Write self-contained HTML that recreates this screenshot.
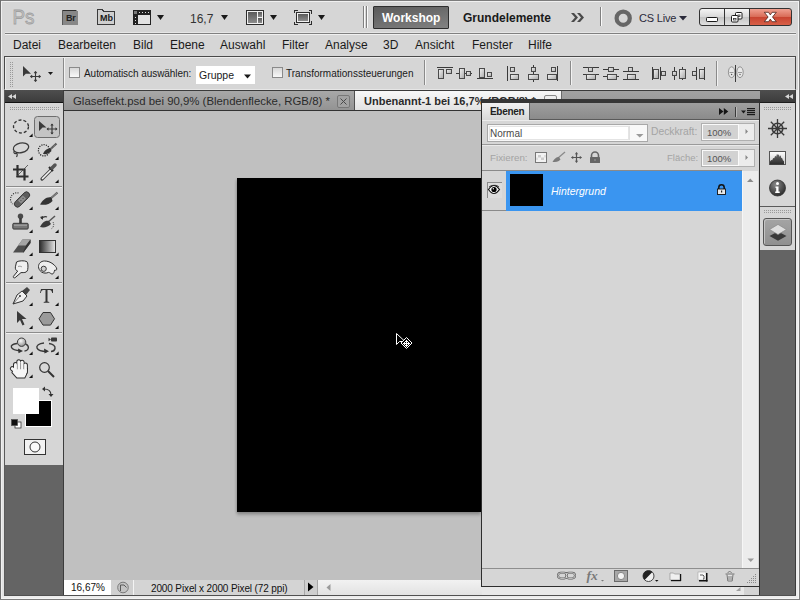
<!DOCTYPE html>
<html><head><meta charset="utf-8">
<style>
*{margin:0;padding:0;box-sizing:border-box}
html,body{width:800px;height:600px;overflow:hidden;background:#d6d6d6;font-family:"Liberation Sans",sans-serif;font-size:12px;color:#1a1a1a}
.a{position:absolute}
.t{position:absolute;white-space:nowrap;line-height:1}
</style></head><body>
<!-- app bar -->
<div id="appbar">

<div class="t" style="left:190px;top:13px;font-size:12px;color:#333">16,7</div>
<div class="a" style="left:373px;top:6px;width:76px;height:23px;border:1px solid #2e2e2e;border-radius:1px;background:linear-gradient(170deg,#5a5a5a,#828282)"></div>
<div class="t" style="left:382px;top:12px;font-size:12px;font-weight:bold;color:#fff">Workshop</div>
<div class="t" style="left:463px;top:12px;font-size:12px;font-weight:bold;color:#1a1a1a">Grundelemente</div>
<div class="t" style="left:639px;top:13px;font-size:11px;letter-spacing:-0.2px;color:#2a2a3a">CS Live</div>
<div class="a" style="left:699px;top:8px;width:26px;height:18px;border:1px solid #333;border-radius:3px 0 0 3px;background:linear-gradient(#f4f4f4,#d8d8d8 50%,#c4c4c4 51%,#e0e0e0)"></div>
<div class="a" style="left:724px;top:8px;width:26px;height:18px;border:1px solid #333;background:linear-gradient(#f4f4f4,#d8d8d8 50%,#c4c4c4 51%,#e0e0e0)"></div>
<div class="a" style="left:749px;top:8px;width:43px;height:18px;border:1px solid #333;border-radius:0 3px 3px 0;background:linear-gradient(#f0a090,#d86a55 50%,#c84430 51%,#d86048)"></div>
</div>
<div class="a" style="left:5px;top:32px;width:791px;height:1px;background:#e6e6e6"></div><div class="a" style="left:5px;top:33px;width:791px;height:1px;background:#808080"></div>
<div class="a" style="left:5px;top:34px;width:791px;height:1px;background:#f0f0f0"></div>

<!-- menu -->
<div id="menu">
<div class="t" style="left:13px;top:39px">Datei</div>
<div class="t" style="left:58px;top:39px">Bearbeiten</div>
<div class="t" style="left:133px;top:39px">Bild</div>
<div class="t" style="left:170px;top:39px">Ebene</div>
<div class="t" style="left:220px;top:39px">Auswahl</div>
<div class="t" style="left:282px;top:39px">Filter</div>
<div class="t" style="left:325px;top:39px">Analyse</div>
<div class="t" style="left:383px;top:39px">3D</div>
<div class="t" style="left:415px;top:39px">Ansicht</div>
<div class="t" style="left:472px;top:39px">Fenster</div>
<div class="t" style="left:528px;top:39px">Hilfe</div>
</div>

<!-- options bar -->
<div class="a" style="left:4px;top:56px;width:792px;height:34px;border:1px solid #4a4a4a;border-bottom-color:#e6e6e6;background:#d6d6d6;box-shadow:inset 1px 1px 0 #ececec"></div>
<div class="t" style="left:84px;top:69px;font-size:10px;letter-spacing:-0.05px">Automatisch auswählen:</div>
<div class="a" style="left:196px;top:66px;width:59px;height:18px;background:#fff"></div>
<div class="t" style="left:199px;top:70px;font-size:10.5px">Gruppe</div>
<div class="t" style="left:286px;top:69px;font-size:10px">Transformationssteuerungen</div>
<div class="a" style="left:69px;top:67px;width:11px;height:11px;border:1px solid #8a8a8a;background:linear-gradient(#d8d8d8,#f8f8f8)"></div>
<div class="a" style="left:272px;top:67px;width:11px;height:11px;border:1px solid #8a8a8a;background:linear-gradient(#d8d8d8,#f8f8f8)"></div>

<!-- toolbox header -->
<div class="a" style="left:5px;top:90px;width:58px;height:12px;background:linear-gradient(#4e4e4e,#3c3c3c)"></div><div class="a" style="left:5px;top:102px;width:58px;height:1px;background:#111"></div>
<!-- toolbox body -->
<div class="a" style="left:5px;top:103px;width:58px;height:362px;background:#d6d6d6"></div>
<div class="a" style="left:5px;top:465px;width:58px;height:130px;background:#646464"></div>
<div class="a" style="left:4px;top:90px;width:1px;height:506px;background:#5a5a5a"></div>
<div class="a" style="left:63px;top:90px;width:1px;height:506px;background:#3c3c3c"></div>

<!-- document area -->
<div class="a" style="left:64px;top:90px;width:696px;height:506px;background:#c0c0c0"></div>
<!-- tabs bar -->
<div class="a" style="left:64px;top:90px;width:696px;height:1px;background:#3a3a3a"></div>
<div class="a" style="left:64px;top:91px;width:696px;height:19px;background:linear-gradient(#a2a2a2,#929292)"></div>
<div class="a" style="left:64px;top:91px;width:290px;height:19px;background:linear-gradient(#a8a8a8,#939393)"></div>
<div class="a" style="left:354px;top:91px;width:1px;height:19px;background:#505050"></div>
<div class="a" style="left:355px;top:91px;width:206px;height:19px;background:linear-gradient(#f8f8f8,#e2e2e2)"></div>
<div class="a" style="left:561px;top:91px;width:1px;height:19px;background:#6a6a6a"></div>
<div class="a" style="left:64px;top:110px;width:696px;height:1px;background:#333"></div>
<div class="t" style="left:73px;top:96px;font-size:11.4px;color:#2a2a2a">Glaseffekt.psd bei 90,9% (Blendenflecke, RGB/8) *</div>
<div class="a" style="left:337px;top:95px;width:13px;height:13px;border:1px solid #787878;border-radius:2px;background:#a2a2a2"></div>
<div class="t" style="left:364px;top:96px;font-size:11px;font-weight:bold;color:#2a2a2a">Unbenannt-1 bei 16,7% (RGB/8) *</div>
<div class="a" style="left:544px;top:95px;width:13px;height:13px;border:1px solid #8a8a8a;border-radius:2px;background:#eee"></div>
<!-- black doc -->
<div class="a" style="left:237px;top:178px;width:244px;height:334px;background:#000;box-shadow:0 3px 3px rgba(0,0,0,.22),-1px 1px 2px rgba(0,0,0,.12)"></div>

<!-- status bar -->
<div class="a" style="left:64px;top:580px;width:696px;height:15px;background:linear-gradient(#f2f2f2,#e2e2e2)"></div>
<div class="a" style="left:64px;top:580px;width:47px;height:15px;background:#fff"></div>
<div class="a" style="left:111px;top:580px;width:22px;height:15px;background:#d0d0d0"></div>
<div class="a" style="left:133px;top:580px;width:1px;height:15px;background:#f4f4f4"></div>
<div class="a" style="left:134px;top:580px;width:170px;height:15px;background:#d4d4d4"></div>
<div class="a" style="left:304px;top:580px;width:14px;height:15px;background:#cfcfcf;border-left:1px solid #a8a8a8;border-right:1px solid #a8a8a8"></div>
<div class="t" style="left:71px;top:583px;font-size:10px;color:#111">16,67%</div>
<div class="t" style="left:151px;top:584px;font-size:10px;letter-spacing:-0.13px;color:#111">2000 Pixel x 2000 Pixel (72 ppi)</div>

<!-- layers panel -->
<div class="a" style="left:481px;top:99px;width:279px;height:488px;background:#d6d6d6;border:1px solid #2e2e2e;border-top:4px solid #363636"></div>
<div class="a" style="left:482px;top:103px;width:277px;height:17px;background:linear-gradient(#9e9e9e,#8a8a8a)"></div>
<div class="a" style="left:530px;top:119px;width:229px;height:1px;background:#5a5a5a"></div>
<div class="a" style="left:482px;top:103px;width:47px;height:18px;background:linear-gradient(#f2f2f2,#d6d6d6)"></div>
<div class="a" style="left:529px;top:103px;width:1px;height:17px;background:#666"></div>
<div class="t" style="left:490px;top:107px;font-size:10px;font-weight:bold;letter-spacing:-0.3px;color:#222">Ebenen</div>
<div class="a" style="left:482px;top:120px;width:277px;height:1px;background:#ececec"></div>
<!-- blend mode -->
<div class="a" style="left:487px;top:124px;width:161px;height:18px;border:1px solid #a8a8a8;background:#f8f8f8"></div>
<div class="a" style="left:489px;top:126px;width:140px;height:14px;background:#fff;border:1px solid #e4e4e4"></div>
<div class="t" style="left:490px;top:129px;font-size:10px;color:#4a4a4a">Normal</div>
<div class="t" style="left:651px;top:127px;font-size:10.3px;color:#a4a4a4">Deckkraft:</div>
<div class="a" style="left:701px;top:123px;width:54px;height:18px;border:1px solid #b0b0b0;background:#ececec"></div>
<div class="a" style="left:702px;top:124px;width:37px;height:16px;border:1px solid #fafafa;background:#d2d2d2"></div>
<div class="t" style="left:707px;top:128px;font-size:9.5px;color:#555">100%</div>
<div class="a" style="left:482px;top:144px;width:277px;height:1px;background:#9a9a9a"></div>
<div class="a" style="left:482px;top:145px;width:277px;height:1px;background:#eaeaea"></div>
<div class="t" style="left:490px;top:153px;font-size:9.8px;color:#a4a4a4">Fixieren:</div>
<div class="t" style="left:667px;top:153px;font-size:9.5px;color:#a4a4a4">Fläche:</div>
<div class="a" style="left:701px;top:149px;width:54px;height:18px;border:1px solid #b0b0b0;background:#ececec"></div>
<div class="a" style="left:702px;top:150px;width:37px;height:16px;border:1px solid #fafafa;background:#d2d2d2"></div>
<div class="t" style="left:707px;top:154px;font-size:9.5px;color:#555">100%</div>
<!-- layer list -->
<div class="a" style="left:482px;top:170px;width:260px;height:1px;background:#8a8a8a"></div>
<div class="a" style="left:742px;top:171px;width:16px;height:397px;background:#ececec;border-left:1px solid #f6f6f6"></div>
<div class="a" style="left:506px;top:171px;width:236px;height:40px;background:#3a95f0"></div>
<div class="a" style="left:482px;top:210px;width:24px;height:1px;background:#8a8a8a"></div>
<div class="a" style="left:487px;top:182px;width:15px;height:16px;border-top:1px solid #8a8a8a;border-left:1px solid #8a8a8a;background:#dcdcdc"></div>
<div class="a" style="left:510px;top:174px;width:33px;height:32px;background:#000"></div>
<div class="t" style="left:551px;top:186px;font-size:10.5px;font-style:italic;color:#fff">Hintergrund</div>
<!-- footer -->
<div class="a" style="left:482px;top:568px;width:277px;height:1px;background:#8e8e8e"></div>
<div class="a" style="left:482px;top:569px;width:277px;height:17px;background:#d6d6d6"></div>
<div class="a" style="left:482px;top:587px;width:262px;height:8px;background:#e8e8e8"></div>
<div class="a" style="left:744px;top:587px;width:15px;height:8px;background:#d4d4d4"></div><div class="a" style="left:759px;top:587px;width:1px;height:8px;background:#333"></div>

<!-- right dock -->
<div class="a" style="left:760px;top:90px;width:35px;height:505px;background:#646464"></div><div class="a" style="left:795px;top:90px;width:1px;height:506px;background:#3a3a3a"></div>
<div class="a" style="left:760px;top:90px;width:35px;height:12px;background:linear-gradient(#4e4e4e,#3c3c3c)"></div>
<div class="a" style="left:760px;top:102px;width:35px;height:1px;background:#1e1e1e"></div>
<div class="a" style="left:760px;top:103px;width:35px;height:103px;background:#d6d6d6"></div>
<div class="a" style="left:760px;top:206px;width:35px;height:1px;background:#5a5a5a"></div>
<div class="a" style="left:760px;top:207px;width:35px;height:43px;background:#d6d6d6"></div>
<div class="a" style="left:763px;top:218px;width:29px;height:28px;border:1px solid #555;border-radius:3px;background:linear-gradient(#a4a4a4,#909090);box-shadow:inset 1px 1px 0 #c4c4c4"></div>
<div class="a" style="left:0;top:595px;width:800px;height:1px;background:#505050"></div>
<div class="a" style="left:0;top:596px;width:800px;height:3px;background:#ececec"></div>
<!-- frame borders -->
<div class="a" style="left:796px;top:90px;width:2px;height:506px;background:#ececec"></div>
<div class="a" style="left:2px;top:90px;width:2px;height:506px;background:#e2e2e2"></div>
<div class="a" style="left:0;top:0;width:800px;height:1px;background:#7c7c7c"></div>
<div class="a" style="left:0;top:0;width:1px;height:600px;background:#6e6e6e"></div>
<div class="a" style="left:1px;top:1px;width:798px;height:1px;background:#f0f0f0"></div>
<div class="a" style="left:1px;top:1px;width:1px;height:598px;background:#f0f0f0"></div>
<div class="a" style="left:799px;top:0;width:1px;height:600px;background:#7c7c7c"></div>
<div class="a" style="left:798px;top:1px;width:1px;height:598px;background:#f4f4f4"></div>
<div class="a" style="left:0;top:599px;width:800px;height:1px;background:#7c7c7c"></div>
<div class="a" style="left:1px;top:598px;width:798px;height:1px;background:#f4f4f4"></div>
<svg class="a" style="left:0;top:0" width="800" height="600" viewBox="0 0 800 600">
<g id="appicons" shape-rendering="crispEdges">
<text x="12.5" y="24.3" font-family="Liberation Sans" font-size="21" textLength="22" lengthAdjust="spacingAndGlyphs" fill="#c6c6c6" stroke="#a0a0a0" stroke-width="0.8">Ps</text>
<!-- Br -->
<path d="M62 10h14l2 2v13h-16z" fill="#878787"/>
<rect x="62" y="10" width="14" height="1" fill="#2e2e2e"/>
<rect x="62" y="10" width="1" height="15" fill="#5a5a5a"/>
<!-- Mb folder -->
<path d="M97.5 9.5h5l1 2h11v13h-17z" fill="#cfcfcf" stroke="#3a3a3a"/>
<!-- film -->
<rect x="133" y="10" width="18" height="15" fill="#222" />
<rect x="138" y="15" width="12" height="9" fill="#e2e2e2"/>
<rect x="134" y="11" width="3" height="3" fill="#7a7a7a"/>
<rect x="139" y="12" width="1" height="1" fill="#ddd"/><rect x="142" y="12" width="1" height="1" fill="#ddd"/><rect x="145" y="12" width="1" height="1" fill="#ddd"/><rect x="148" y="12" width="1" height="1" fill="#ddd"/>
<rect x="135" y="17" width="1" height="1" fill="#ddd"/><rect x="135" y="20" width="1" height="1" fill="#ddd"/><rect x="135" y="23" width="1" height="1" fill="#ddd"/>
<path d="M157 15h7l-3.5 5z" fill="#1a1a1a" shape-rendering="auto"/>
<path d="M221 15h7l-3.5 5z" fill="#1a1a1a" shape-rendering="auto"/>
<path d="M270 15h7l-3.5 5z" fill="#1a1a1a" shape-rendering="auto"/>
<path d="M318 15h7l-3.5 5z" fill="#1a1a1a" shape-rendering="auto"/>
<path d="M679 16h8l-4 4.5z" fill="#2a2a3a" shape-rendering="auto"/>
<!-- grid icon -->
<rect x="246" y="10" width="18" height="15" fill="#2c2c2c"/>
<rect x="247" y="11" width="16" height="13" fill="#f2f2f2"/>
<defs><linearGradient id="g1" x1="0" y1="0" x2="0" y2="1"><stop offset="0" stop-color="#5a5a5a"/><stop offset="1" stop-color="#8c8c8c"/></linearGradient></defs>
<rect x="248" y="12" width="9" height="11" fill="url(#g1)"/>
<rect x="258" y="12" width="4" height="5" fill="url(#g1)"/>
<rect x="258" y="18" width="4" height="5" fill="url(#g1)"/>
<!-- screen icon -->
<path d="M294.5 13v-3h3M308.5 10.5h3v3M311.5 21v3h-3M297.5 24.5h-3v-3" fill="none" stroke="#2c2c2c"/>
<rect x="296" y="12" width="14" height="11" fill="#2c2c2c"/>
<rect x="297" y="13" width="12" height="9" fill="#f2f2f2"/>
<rect x="298" y="14" width="10" height="7" fill="url(#g1)"/>
<!-- separators -->
<rect x="363" y="6" width="1" height="22" fill="#808080"/><rect x="364" y="6" width="1" height="22" fill="#fafafa"/>
<rect x="366" y="6" width="1" height="22" fill="#808080"/><rect x="367" y="6" width="1" height="22" fill="#fafafa"/>
<rect x="600" y="7" width="1" height="19" fill="#808080"/><rect x="601" y="7" width="1" height="19" fill="#fafafa"/>
<!-- chevrons -->
<path d="M571 13l4 4.5-4 4.5h3l4-4.5-4-4.5zM577 13l4 4.5-4 4.5h3l4-4.5-4-4.5z" fill="#4a4a4a" shape-rendering="auto"/>
<!-- cs live ring -->
<circle cx="623.2" cy="18.2" r="6.6" fill="none" stroke="#666" stroke-width="4.2" shape-rendering="auto"/>
<!-- minimize -->
<rect x="706.5" y="17.5" width="11" height="4" rx=".8" fill="#fff" stroke="#1a1a1a" shape-rendering="auto"/>
<!-- restore -->
<rect x="735.5" y="12.5" width="6.5" height="6.5" rx="1" fill="#fff" stroke="#1a1a1a" shape-rendering="auto"/><rect x="738" y="15" width="2" height="1.5" fill="none" stroke="#333" stroke-width=".8" shape-rendering="auto"/>
<rect x="731.5" y="15.5" width="6.5" height="6.5" rx="1" fill="#fff" stroke="#1a1a1a" shape-rendering="auto"/><rect x="733.5" y="18.5" width="2.5" height="1.5" fill="none" stroke="#333" stroke-width=".8" shape-rendering="auto"/>
<!-- close X -->
<path d="M764.3 12.3h4.2l1.8 2.6 1.8-2.6h4.2l-3.8 4.7 3.8 4.7h-4.2l-1.8-2.6-1.8 2.6h-4.2l3.8-4.7z" fill="#fff" stroke="#4a2018" stroke-width="0.8" shape-rendering="auto"/>
</g>
<g id="tools">
<path d="M12 94v5l-4-2.5zM16 94v5l-4-2.5z" fill="#d8d8d8"/>
<rect x="10" y="107" width="1" height="1" fill="#9a9a9a"/>
<rect x="12" y="107" width="1" height="1" fill="#9a9a9a"/>
<rect x="14" y="107" width="1" height="1" fill="#9a9a9a"/>
<rect x="16" y="107" width="1" height="1" fill="#9a9a9a"/>
<rect x="18" y="107" width="1" height="1" fill="#9a9a9a"/>
<rect x="20" y="107" width="1" height="1" fill="#9a9a9a"/>
<rect x="22" y="107" width="1" height="1" fill="#9a9a9a"/>
<rect x="24" y="107" width="1" height="1" fill="#9a9a9a"/>
<rect x="26" y="107" width="1" height="1" fill="#9a9a9a"/>
<rect x="28" y="107" width="1" height="1" fill="#9a9a9a"/>
<rect x="30" y="107" width="1" height="1" fill="#9a9a9a"/>
<rect x="32" y="107" width="1" height="1" fill="#9a9a9a"/>
<rect x="34" y="107" width="1" height="1" fill="#9a9a9a"/>
<rect x="36" y="107" width="1" height="1" fill="#9a9a9a"/>
<rect x="38" y="107" width="1" height="1" fill="#9a9a9a"/>
<rect x="40" y="107" width="1" height="1" fill="#9a9a9a"/>
<rect x="42" y="107" width="1" height="1" fill="#9a9a9a"/>
<rect x="44" y="107" width="1" height="1" fill="#9a9a9a"/>
<rect x="46" y="107" width="1" height="1" fill="#9a9a9a"/>
<rect x="48" y="107" width="1" height="1" fill="#9a9a9a"/>
<rect x="50" y="107" width="1" height="1" fill="#9a9a9a"/>
<rect x="52" y="107" width="1" height="1" fill="#9a9a9a"/>
<rect x="54" y="107" width="1" height="1" fill="#9a9a9a"/>
<rect x="56" y="107" width="1" height="1" fill="#9a9a9a"/>
<rect x="58" y="107" width="1" height="1" fill="#9a9a9a"/>
<rect x="10" y="109" width="1" height="1" fill="#9a9a9a"/>
<rect x="12" y="109" width="1" height="1" fill="#9a9a9a"/>
<rect x="14" y="109" width="1" height="1" fill="#9a9a9a"/>
<rect x="16" y="109" width="1" height="1" fill="#9a9a9a"/>
<rect x="18" y="109" width="1" height="1" fill="#9a9a9a"/>
<rect x="20" y="109" width="1" height="1" fill="#9a9a9a"/>
<rect x="22" y="109" width="1" height="1" fill="#9a9a9a"/>
<rect x="24" y="109" width="1" height="1" fill="#9a9a9a"/>
<rect x="26" y="109" width="1" height="1" fill="#9a9a9a"/>
<rect x="28" y="109" width="1" height="1" fill="#9a9a9a"/>
<rect x="30" y="109" width="1" height="1" fill="#9a9a9a"/>
<rect x="32" y="109" width="1" height="1" fill="#9a9a9a"/>
<rect x="34" y="109" width="1" height="1" fill="#9a9a9a"/>
<rect x="36" y="109" width="1" height="1" fill="#9a9a9a"/>
<rect x="38" y="109" width="1" height="1" fill="#9a9a9a"/>
<rect x="40" y="109" width="1" height="1" fill="#9a9a9a"/>
<rect x="42" y="109" width="1" height="1" fill="#9a9a9a"/>
<rect x="44" y="109" width="1" height="1" fill="#9a9a9a"/>
<rect x="46" y="109" width="1" height="1" fill="#9a9a9a"/>
<rect x="48" y="109" width="1" height="1" fill="#9a9a9a"/>
<rect x="50" y="109" width="1" height="1" fill="#9a9a9a"/>
<rect x="52" y="109" width="1" height="1" fill="#9a9a9a"/>
<rect x="54" y="109" width="1" height="1" fill="#9a9a9a"/>
<rect x="56" y="109" width="1" height="1" fill="#9a9a9a"/>
<rect x="58" y="109" width="1" height="1" fill="#9a9a9a"/>
<rect x="6" y="186" width="56" height="1" fill="#8c8c8c"/><rect x="6" y="187" width="56" height="1" fill="#f0f0f0"/>
<rect x="6" y="282" width="56" height="1" fill="#8c8c8c"/><rect x="6" y="283" width="56" height="1" fill="#f0f0f0"/>
<rect x="6" y="332" width="56" height="1" fill="#8c8c8c"/><rect x="6" y="333" width="56" height="1" fill="#f0f0f0"/>
<path d="M29 137h3.6v-3.6z" fill="#111"/>
<path d="M29 160h3.6v-3.6z" fill="#111"/>
<path d="M55 160h3.6v-3.6z" fill="#111"/>
<path d="M29 183h3.6v-3.6z" fill="#111"/>
<path d="M55 183h3.6v-3.6z" fill="#111"/>
<path d="M29 210h3.6v-3.6z" fill="#111"/>
<path d="M55 210h3.6v-3.6z" fill="#111"/>
<path d="M29 233h3.6v-3.6z" fill="#111"/>
<path d="M55 233h3.6v-3.6z" fill="#111"/>
<path d="M29 256h3.6v-3.6z" fill="#111"/>
<path d="M55 256h3.6v-3.6z" fill="#111"/>
<path d="M29 279h3.6v-3.6z" fill="#111"/>
<path d="M55 279h3.6v-3.6z" fill="#111"/>
<path d="M29 306h3.6v-3.6z" fill="#111"/>
<path d="M55 306h3.6v-3.6z" fill="#111"/>
<path d="M29 329h3.6v-3.6z" fill="#111"/>
<path d="M55 329h3.6v-3.6z" fill="#111"/>
<path d="M29 355h3.6v-3.6z" fill="#111"/>
<path d="M55 355h3.6v-3.6z" fill="#111"/>
<path d="M29 378h3.6v-3.6z" fill="#111"/>
<rect x="34.5" y="116.5" width="25" height="21" rx="3" fill="#c4c4c4" stroke="#6e6e6e"/>
<ellipse cx="21" cy="126.5" rx="7.5" ry="6.5" fill="none" stroke="#333" stroke-width="1.3" stroke-dasharray="3 2"/>
<path d="M39 121v10l3.5-3.5h4z" fill="#3a3a3a"/>
<path d="M52 124v10M47 129h10" stroke="#3a3a3a" stroke-width="1.2"/><path d="M50.3 125.5l1.7-2 1.7 2zM50.3 132.5l1.7 2 1.7-2zM48.5 127.3l-2 1.7 2 1.7zM55.5 127.3l2 1.7-2 1.7z" fill="#3a3a3a"/>
<ellipse cx="21" cy="147.8" rx="7.8" ry="4.8" fill="none" stroke="#3a3a3a" stroke-width="1.3" transform="rotate(-12 21 147.8)"/><path d="M14.5 151c-1.5 1.5 0 3 1.5 2.5s1.5 2 .5 3.5" fill="none" stroke="#3a3a3a" stroke-width="1.2"/>
<circle cx="44" cy="150.3" r="5.6" fill="none" stroke="#1a1a1a" stroke-width="1.2" stroke-dasharray="1.1 1.2"/>
<path d="M56.5 143.5l-7 6.5" stroke="#555" stroke-width="2"/><path d="M56.5 143.5l-7 6.5" stroke="#ccc" stroke-width=".5" stroke-dasharray="1 1"/><path d="M50.5 148.5c-3.5-.5-6.5 2.5-7.5 5.5 3.5.5 6.5-.5 8.5-3z" fill="#333"/>
<path d="M17.5 165v11.5h11M13 169.5h11.5v11" fill="none" stroke="#2e2e2e" stroke-width="2.2"/><path d="M16 177l12-12" stroke="#444" stroke-width="0.8"/>
<path d="M42 179l9-9" stroke="#444" stroke-width="3.2" stroke-linecap="round"/><path d="M42.5 178.5l8-8" stroke="#f6f6f6" stroke-width="1.6" stroke-linecap="round"/><path d="M49 167l4 4" stroke="#2a2a2a" stroke-width="2.2"/><path d="M52 168l3-3" stroke="#555" stroke-width="3.5" stroke-linecap="round"/>
<path d="M18.5 193a6.5 6.5 0 0 0 -6 11" fill="none" stroke="#222" stroke-width="1.1" stroke-dasharray="1 1.3"/><g transform="rotate(-45 22 199.5)"><rect x="12.5" y="196.3" width="19" height="6.4" rx="3.2" fill="#5e5e5e" stroke="#2e2e2e" stroke-width=".8"/><rect x="18.5" y="197.3" width="7" height="4.4" fill="#909090"/><circle cx="20.5" cy="199.5" r=".6" fill="#444"/><circle cx="23.5" cy="199.5" r=".6" fill="#444"/></g>
<path d="M57.5 192.5l-7.5 6.5" stroke="#555" stroke-width="2"/><path d="M57.5 192.5l-7.5 6.5" stroke="#ccc" stroke-width=".5"/><path d="M51.5 197.5c-4.5-1.5-9 2.5-11.5 7 4.5 1 9.5 0 12.5-3.5z" fill="#333"/>
<circle cx="20.5" cy="216.3" r="2.7" fill="#4a4a4a"/><rect x="19.2" y="218" width="2.6" height="5.5" fill="#3a3a3a"/><rect x="12.8" y="223.3" width="15.4" height="5.8" rx="1" fill="#777" stroke="#2e2e2e" stroke-width="0.9"/><rect x="14" y="224.5" width="13" height="1.5" fill="#999"/>
<path d="M55 216l-8 7" stroke="#555" stroke-width="1.5"/><path d="M49 221c-4-1-7 2-9 6 4 1 8 0 11-3z" fill="#3a3a3a"/><path d="M47 217c-2-1-4 0-6 1.5" fill="none" stroke="#333" stroke-width="1.2"/><path d="M40 217l3 3 0-4z" fill="#333"/><path d="M53 222a5 5 0 0 1 -2 7" fill="none" stroke="#333" stroke-dasharray="1 1"/>
<path d="M13 252.5l9.5-13h8v3.5l-7 9.5z" fill="#4e4e4e"/><path d="M18 245.5l4.5-6h8l-4.5 6z" fill="#a4a4a4"/><path d="M26 245.5l4.5-6v3.5l-7 9.5h-.5z" fill="#333"/>
<defs><linearGradient id="grd" x1="0" x2="1"><stop offset="0" stop-color="#2a2a2a"/><stop offset="1" stop-color="#e8e8e8"/></linearGradient><radialGradient id="sph" cx=".4" cy=".35" r=".7"><stop offset="0" stop-color="#fafafa"/><stop offset="1" stop-color="#8a8a8a"/></radialGradient></defs>
<rect x="39.5" y="240.5" width="16" height="12" fill="url(#grd)" stroke="#333"/>
<path d="M16.5 262c2.5-1.5 8-1.6 10.3-.4 1.3 1 1.4 5.2.9 8-.4 2.2-2 3-4.5 3h-2.2l-5.8 5c-1 .8-2.4-.1-1.8-1.2l4.3-5.3c-2-.6-2.6-2.4-2.3-4.3z" fill="#f0f0f0" stroke="#2e2e2e" stroke-width="1"/><path d="M18 266.5c1.5-.5 3-.3 4 .5" fill="none" stroke="#777" stroke-width=".7"/>
<path d="M38.5 266.5c0-3 2.5-5.5 6-5.5 3 0 6 1 8.5 3 2 1.5 3.5 3.3 3.8 5 0 1-1 1.5-2 1-.8 1.8-1 4-2.6 4-1.5 0-2.2-1.6-3.7-1.6-2 1-5 1-7-.4-2-1.5-3-3.5-3-5.5z" fill="#eeeeee" stroke="#2e2e2e" stroke-width="1"/><circle cx="43.7" cy="268.8" r="2.6" fill="#cfcfcf" stroke="#3a3a3a" stroke-width="1"/>
<path d="M13 304l4-9 5-4 5 5-4 5z" fill="#f0f0f0" stroke="#333" stroke-width="1"/><path d="M22 291l5-4 3 3-4 5z" fill="#444"/><circle cx="20" cy="296" r="0.9" fill="#222"/><path d="M13 304l7-8" stroke="#333" stroke-width="0.6"/>
<path d="M41 289h12v4h-.8c-.3-2-1-3-2.5-3h-2.2v11.5l1.8.5v.8h-5.6v-.8l1.8-.5v-11.5h-2.2c-1.5 0-2.2 1-2.5 3h-.8z" fill="#333"/>
<path d="M17 311v12l3-3 2.5 5.5 2-1-2.5-5.5h4.5z" fill="#3a3a3a"/>
<path d="M43 312.5h7.5l4 6.3-4 6.3h-7.5l-4-6.3z" fill="#9a9a9a" stroke="#333" stroke-width="1"/>
<path d="M17 343.5c-4 .5-6.5 2-5.5 4s5 3 9 3.3" fill="none" stroke="#3a3a3a" stroke-width="1.4"/><path d="M25.5 344c2.5 1 3.5 3 2.5 5s-2 2-3.5 2" fill="none" stroke="#3a3a3a" stroke-width="1.4"/><path d="M18 348.5l5 2.5-4.5 2.3z" fill="#333"/><circle cx="21.6" cy="342.2" r="4.2" fill="url(#sph)" stroke="#3a3a3a" stroke-width="1"/>
<path d="M44 343c-5 .5-8 2.5-7 5s6 3.5 10 3.5" fill="none" stroke="#3a3a3a" stroke-width="1.4"/><path d="M49 343.5c4 .5 6.5 2.5 6 5s-2.5 3-4 3" fill="none" stroke="#3a3a3a" stroke-width="1.4"/><path d="M44 348.5l5 2.8-4.5 2.2z" fill="#333"/><rect x="51" y="337.5" width="6" height="4" rx=".8" fill="#3a3a3a"/><path d="M51 339.5l-2.5-1.8v3.6z" fill="#3a3a3a"/>
<g fill="#2e2e2e" stroke="#2e2e2e" stroke-width="2"><rect x="14" y="363" width="3" height="10" rx="1.5"/><rect x="17.3" y="360.3" width="3" height="11" rx="1.5"/><rect x="20.6" y="360.8" width="3" height="11" rx="1.5"/><rect x="23.9" y="363.5" width="3" height="10" rx="1.5"/><path d="M14 369h12.9l-.9 5.5-1.5 3h-7.5l-4.5-5z"/><rect x="10.5" y="368.2" width="6.5" height="2.8" rx="1.4" transform="rotate(40 13.5 369.6)"/></g><g fill="#f6f6f6"><rect x="14" y="363" width="3" height="10" rx="1.5"/><rect x="17.3" y="360.3" width="3" height="11" rx="1.5"/><rect x="20.6" y="360.8" width="3" height="11" rx="1.5"/><rect x="23.9" y="363.5" width="3" height="10" rx="1.5"/><path d="M14 369h12.9l-.9 5.5-1.5 3h-7.5l-4.5-5z"/><rect x="10.5" y="368.2" width="6.5" height="2.8" rx="1.4" transform="rotate(40 13.5 369.6)"/></g><path d="M17.3 363.5v6M20.6 363v6.5M23.9 364.5v5" stroke="#9a9a9a" stroke-width=".6"/>
<circle cx="44.5" cy="367.5" r="4.8" fill="#d8d8d8" stroke="#333" stroke-width="1.2"/><path d="M48 371l6 6" stroke="#333" stroke-width="2"/>
<rect x="25.5" y="400.5" width="26" height="26" fill="#000" stroke="#fff"/><rect x="13" y="388" width="26" height="26" fill="#fff"/>
<rect x="15" y="422" width="6" height="6" fill="#fff" stroke="#333" stroke-width="0.8"/><rect x="11.5" y="419.5" width="6" height="6" fill="#111" stroke="#555" stroke-width="0.8"/>
<path d="M44 389c4 0 7 2 7 6" fill="none" stroke="#333" stroke-width="1.2"/><path d="M42 389l3-2.5v5z M51 397l-2.5-3h5z" fill="#333"/>
<rect x="24.5" y="439.5" width="21" height="15" fill="#f2f2f2" stroke="#333"/><circle cx="35" cy="447" r="5" fill="#fafafa" stroke="#333" stroke-width="1"/>
</g>
<g id="panelicons">
<path d="M340.5 98.5l6 6M346.5 98.5l-6 6" stroke="#4a4a4a" stroke-width="1"/>
<path d="M719 108v7l4.5-3.5zM723.8 108v7l4.5-3.5z" fill="#151515"/>
<rect x="735" y="107" width="1" height="10" fill="#3a3a3a"/><rect x="736" y="107" width="1" height="10" fill="#b8b8b8"/>
<path d="M741 110.5h5l-2.5 3z" fill="#1a1a1a"/>
<rect x="747" y="108" width="8" height="1.2" fill="#1a1a1a"/>
<rect x="747" y="110" width="8" height="1.2" fill="#1a1a1a"/>
<rect x="747" y="112" width="8" height="1.2" fill="#1a1a1a"/>
<rect x="747" y="114" width="8" height="1.2" fill="#1a1a1a"/>
<path d="M636 134h7.5l-3.75 3.5z" fill="#9a9a9a"/>
<rect x="629" y="126" width="1" height="14" fill="#e0e0e0"/>
<path d="M745.5 129v5l2.5-2.5z M745.5 155v5l2.5-2.5z" fill="#888"/>
<rect x="535.5" y="152.5" width="11" height="10" fill="#f2f2f2" stroke="#777"/><rect x="538" y="155" width="3" height="2.5" fill="#ccc"/><rect x="541" y="157.5" width="3" height="2.5" fill="#ccc"/><rect x="536" y="157.5" width="2" height="2.5" fill="#ddd"/><rect x="544" y="155" width="2" height="2.5" fill="#ddd"/>
<path d="M565 152l-7 6" stroke="#8a8a8a" stroke-width="1.3"/><path d="M559 157c-3 0-5 2-6.5 5 3 0 6 0 8-2.5z" fill="#7a7a7a"/>
<path d="M576.5 152.5v10M571.5 157.5h10" stroke="#555" stroke-width="1.2"/><path d="M574.8 154.2l1.7-2 1.7 2zM574.8 160.8l1.7 2 1.7-2zM573.2 155.8l-2 1.7 2 1.7zM579.8 155.8l2 1.7-2 1.7z" fill="#555"/>
<path d="M591.5 157v-1.5a3 3 0 0 1 7 0v1.5" fill="none" stroke="#666" stroke-width="1.6"/><rect x="590" y="157" width="10" height="6" rx="0.5" fill="#666"/><rect x="594.5" y="159" width="1" height="2" fill="#999"/>
<path d="M488.5 189.5c2-3 4-4 5.5-4s3.5 1 5.5 4c-2 3-4 4-5.5 4s-3.5-1-5.5-4z" fill="#fafafa" stroke="#111" stroke-width="1.2"/><circle cx="494" cy="189.5" r="2.6" fill="#000"/><circle cx="493.3" cy="188.8" r=".7" fill="#fff"/><path d="M489 187c2-2 8-2.5 10 0" fill="none" stroke="#222" stroke-width="0.8"/>
<path d="M718.8 189v-1.5a2.7 2.7 0 0 1 5.4 0v1.5" fill="none" stroke="#111" stroke-width="1.5"/><rect x="717.5" y="189" width="8" height="5.5" fill="#e8e8e8" stroke="#111" stroke-width="0.9"/><rect x="721" y="190.5" width="1.2" height="2" fill="#222"/>
<path d="M747 182h6.5l-3.25-3.5z" fill="#8a8a8a"/><path d="M747.5 558.5h6.5l-3.25 3.5z" fill="#9a9a9a"/>
<g fill="none"><rect x="558" y="572.8" width="9" height="5.6" rx="2.8" stroke="#5a5a5a" stroke-width="2"/><rect x="566" y="572.8" width="9" height="5.6" rx="2.8" stroke="#5a5a5a" stroke-width="2"/><rect x="558" y="572.8" width="9" height="5.6" rx="2.8" stroke="#f4f4f4" stroke-width=".7"/><rect x="566" y="572.8" width="9" height="5.6" rx="2.8" stroke="#f4f4f4" stroke-width=".7"/></g>
<text x="586.5" y="580" font-family="Liberation Serif" font-style="italic" font-weight="bold" font-size="13.5" fill="#7a7a7a">fx</text><path d="M601 580h3l-1.5 1.5z" fill="#777"/>
<rect x="614.5" y="570.5" width="13" height="11" fill="#a8a8a8" stroke="#6a6a6a"/><circle cx="621" cy="576" r="3.6" fill="#f4f4f4" stroke="#777" stroke-width=".8"/>
<circle cx="648.5" cy="576" r="5.5" fill="#f0f0f0" stroke="#444" stroke-width="1"/><path d="M652.4 572.1a5.5 5.5 0 0 0 -7.8 7.8z" fill="#222"/><path d="M655 580h3.5l-1.75 1.8z" fill="#111"/>
<path d="M670 573h3.5l1 1h5.5v6h-10z" fill="#f0f0f0" stroke="#888" stroke-width=".6"/><rect x="671" y="580" width="10" height="1.2" fill="#111"/><rect x="680" y="574" width="1.2" height="7" fill="#111"/>
<rect x="698" y="572" width="8" height="8" fill="#f8f8f8" stroke="#999" stroke-width=".5"/><rect x="699" y="580" width="8.5" height="1.5" fill="#111"/><rect x="706" y="573" width="1.5" height="8.5" fill="#111"/><path d="M700 575h3l1 1v3h-1" fill="none" stroke="#333" stroke-width=".8"/>
<path d="M725.5 574h9M727 574.5l.8 6.5h4.4l.8-6.5" fill="#e4e4e4" stroke="#777" stroke-width="1"/><path d="M728 573c0-2 3-2 3.5 0" fill="none" stroke="#777"/><path d="M729 576v4M731 576v4" stroke="#666" stroke-width=".8"/>
<rect x="755" y="574" width="1" height="1" fill="#8a8a8a"/>
<rect x="753" y="576" width="1" height="1" fill="#8a8a8a"/>
<rect x="755" y="576" width="1" height="1" fill="#8a8a8a"/>
<rect x="751" y="578" width="1" height="1" fill="#8a8a8a"/>
<rect x="753" y="578" width="1" height="1" fill="#8a8a8a"/>
<rect x="755" y="578" width="1" height="1" fill="#8a8a8a"/>
<rect x="749" y="580" width="1" height="1" fill="#8a8a8a"/>
<rect x="751" y="580" width="1" height="1" fill="#8a8a8a"/>
<rect x="753" y="580" width="1" height="1" fill="#8a8a8a"/>
<rect x="755" y="580" width="1" height="1" fill="#8a8a8a"/>
<rect x="747" y="582" width="1" height="1" fill="#8a8a8a"/>
<rect x="749" y="582" width="1" height="1" fill="#8a8a8a"/>
<rect x="751" y="582" width="1" height="1" fill="#8a8a8a"/>
<rect x="753" y="582" width="1" height="1" fill="#8a8a8a"/>
<rect x="755" y="582" width="1" height="1" fill="#8a8a8a"/>
<circle cx="123" cy="587.5" r="5.3" fill="#c4c4c4" stroke="#7a7a7a" stroke-width="1"/><path d="M120.5 591v-6h3.5l2.5 2.5" fill="none" stroke="#5a5a5a" stroke-width="1"/>
<path d="M308 582.5v9l5.5-4.5z" fill="#000"/>
<path d="M330.5 584v7l-4-3.5z" fill="#9a9a9a"/>
<path d="M736 591h4.5v-4z" fill="#a0a0a0"/>
<path d="M789 94v5l-4-2.5zM793 94v5l-4-2.5z" fill="#d8d8d8"/>
<rect x="764" y="107" width="1" height="1" fill="#9a9a9a"/>
<rect x="766" y="107" width="1" height="1" fill="#9a9a9a"/>
<rect x="768" y="107" width="1" height="1" fill="#9a9a9a"/>
<rect x="770" y="107" width="1" height="1" fill="#9a9a9a"/>
<rect x="772" y="107" width="1" height="1" fill="#9a9a9a"/>
<rect x="774" y="107" width="1" height="1" fill="#9a9a9a"/>
<rect x="776" y="107" width="1" height="1" fill="#9a9a9a"/>
<rect x="778" y="107" width="1" height="1" fill="#9a9a9a"/>
<rect x="780" y="107" width="1" height="1" fill="#9a9a9a"/>
<rect x="782" y="107" width="1" height="1" fill="#9a9a9a"/>
<rect x="784" y="107" width="1" height="1" fill="#9a9a9a"/>
<rect x="786" y="107" width="1" height="1" fill="#9a9a9a"/>
<rect x="788" y="107" width="1" height="1" fill="#9a9a9a"/>
<rect x="790" y="107" width="1" height="1" fill="#9a9a9a"/>
<rect x="764" y="109" width="1" height="1" fill="#9a9a9a"/>
<rect x="766" y="109" width="1" height="1" fill="#9a9a9a"/>
<rect x="768" y="109" width="1" height="1" fill="#9a9a9a"/>
<rect x="770" y="109" width="1" height="1" fill="#9a9a9a"/>
<rect x="772" y="109" width="1" height="1" fill="#9a9a9a"/>
<rect x="774" y="109" width="1" height="1" fill="#9a9a9a"/>
<rect x="776" y="109" width="1" height="1" fill="#9a9a9a"/>
<rect x="778" y="109" width="1" height="1" fill="#9a9a9a"/>
<rect x="780" y="109" width="1" height="1" fill="#9a9a9a"/>
<rect x="782" y="109" width="1" height="1" fill="#9a9a9a"/>
<rect x="784" y="109" width="1" height="1" fill="#9a9a9a"/>
<rect x="786" y="109" width="1" height="1" fill="#9a9a9a"/>
<rect x="788" y="109" width="1" height="1" fill="#9a9a9a"/>
<rect x="790" y="109" width="1" height="1" fill="#9a9a9a"/>
<rect x="764" y="210" width="1" height="1" fill="#9a9a9a"/>
<rect x="766" y="210" width="1" height="1" fill="#9a9a9a"/>
<rect x="768" y="210" width="1" height="1" fill="#9a9a9a"/>
<rect x="770" y="210" width="1" height="1" fill="#9a9a9a"/>
<rect x="772" y="210" width="1" height="1" fill="#9a9a9a"/>
<rect x="774" y="210" width="1" height="1" fill="#9a9a9a"/>
<rect x="776" y="210" width="1" height="1" fill="#9a9a9a"/>
<rect x="778" y="210" width="1" height="1" fill="#9a9a9a"/>
<rect x="780" y="210" width="1" height="1" fill="#9a9a9a"/>
<rect x="782" y="210" width="1" height="1" fill="#9a9a9a"/>
<rect x="784" y="210" width="1" height="1" fill="#9a9a9a"/>
<rect x="786" y="210" width="1" height="1" fill="#9a9a9a"/>
<rect x="788" y="210" width="1" height="1" fill="#9a9a9a"/>
<rect x="790" y="210" width="1" height="1" fill="#9a9a9a"/>
<rect x="764" y="212" width="1" height="1" fill="#9a9a9a"/>
<rect x="766" y="212" width="1" height="1" fill="#9a9a9a"/>
<rect x="768" y="212" width="1" height="1" fill="#9a9a9a"/>
<rect x="770" y="212" width="1" height="1" fill="#9a9a9a"/>
<rect x="772" y="212" width="1" height="1" fill="#9a9a9a"/>
<rect x="774" y="212" width="1" height="1" fill="#9a9a9a"/>
<rect x="776" y="212" width="1" height="1" fill="#9a9a9a"/>
<rect x="778" y="212" width="1" height="1" fill="#9a9a9a"/>
<rect x="780" y="212" width="1" height="1" fill="#9a9a9a"/>
<rect x="782" y="212" width="1" height="1" fill="#9a9a9a"/>
<rect x="784" y="212" width="1" height="1" fill="#9a9a9a"/>
<rect x="786" y="212" width="1" height="1" fill="#9a9a9a"/>
<rect x="788" y="212" width="1" height="1" fill="#9a9a9a"/>
<rect x="790" y="212" width="1" height="1" fill="#9a9a9a"/>
<g stroke="#3a3a3a" fill="none"><circle cx="777.5" cy="128.5" r="5.3" stroke-width="1.6"/><path d="M777.5 119v19M768 128.5h19M770.8 121.8l13.4 13.4M784.2 121.8l-13.4 13.4" stroke-width="1.3"/></g><circle cx="777.5" cy="128.5" r="1.5" fill="#3a3a3a"/>
<defs><linearGradient id="hg" x1="0" y1="0" x2="0" y2="1"><stop offset="0" stop-color="#ffffff"/><stop offset="1" stop-color="#c8c8c8"/></linearGradient><radialGradient id="ig" cx=".4" cy=".3" r=".8"><stop offset="0" stop-color="#8a8a8a"/><stop offset="1" stop-color="#1e1e1e"/></radialGradient></defs>
<rect x="769.5" y="151.5" width="16" height="13" fill="url(#hg)" stroke="#555"/><defs><linearGradient id="mg" x1="0" y1="0" x2="0" y2="1"><stop offset="0" stop-color="#6a6a6a"/><stop offset="1" stop-color="#2a2a2a"/></linearGradient></defs><path d="M770 164.5v-3l1.2-1.5 1 .3 1-2.3 1 .2 1-2.5 1 1 .8-3 1 1.5.8-1 .8 2.5 1-1.5.6 2.5 1 .5.7 2 1.1 1v3.3z" fill="url(#mg)"/>
<circle cx="777.5" cy="188" r="8" fill="url(#ig)" stroke="#333" stroke-width=".8"/><circle cx="777.5" cy="183.5" r="1.5" fill="#fff"/><path d="M775.5 186.5h3v5h1.2v1.5h-4.5v-1.5h1v-3.5h-.7z" fill="#fff"/>
<path d="M778 231.5l8.5 4.5-8.5 4.7-8.5-4.7z" fill="#3a3a3a"/><path d="M778 224.4l8.4 5.1-8.4 5.1-8.4-5.1z" fill="#dedede" stroke="#8a8a8a" stroke-width=".7"/>
<path d="M396.5 333.5v11l3-3h5.5z" fill="#000" stroke="#fff" stroke-width="1"/><path d="M406.5 337.5l5.5 5.5-5.5 5.5-5.5-5.5z" fill="#000" stroke="#fff" stroke-width="1"/><g shape-rendering="crispEdges" fill="#fff"><rect x="406" y="340" width="1" height="7"/><rect x="403" y="343" width="7" height="1"/><rect x="405" y="341" width="3" height="1"/><rect x="405" y="345" width="3" height="1"/><rect x="404" y="342" width="1" height="3"/><rect x="408" y="342" width="1" height="3"/></g>
</g>
<g id="opticons" shape-rendering="crispEdges">
<defs><linearGradient id="gb" x1="0" y1="0" x2="1" y2="1"><stop offset="0" stop-color="#f4f4f4"/><stop offset="1" stop-color="#a8a8a8"/></linearGradient></defs>
<rect x="10" y="62" width="1" height="1" fill="#9a9a9a"/><rect x="12" y="62" width="1" height="1" fill="#9a9a9a"/>
<rect x="10" y="64" width="1" height="1" fill="#9a9a9a"/><rect x="12" y="64" width="1" height="1" fill="#9a9a9a"/>
<rect x="10" y="66" width="1" height="1" fill="#9a9a9a"/><rect x="12" y="66" width="1" height="1" fill="#9a9a9a"/>
<rect x="10" y="68" width="1" height="1" fill="#9a9a9a"/><rect x="12" y="68" width="1" height="1" fill="#9a9a9a"/>
<rect x="10" y="70" width="1" height="1" fill="#9a9a9a"/><rect x="12" y="70" width="1" height="1" fill="#9a9a9a"/>
<rect x="10" y="72" width="1" height="1" fill="#9a9a9a"/><rect x="12" y="72" width="1" height="1" fill="#9a9a9a"/>
<rect x="10" y="74" width="1" height="1" fill="#9a9a9a"/><rect x="12" y="74" width="1" height="1" fill="#9a9a9a"/>
<rect x="10" y="76" width="1" height="1" fill="#9a9a9a"/><rect x="12" y="76" width="1" height="1" fill="#9a9a9a"/>
<rect x="10" y="78" width="1" height="1" fill="#9a9a9a"/><rect x="12" y="78" width="1" height="1" fill="#9a9a9a"/>
<rect x="10" y="80" width="1" height="1" fill="#9a9a9a"/><rect x="12" y="80" width="1" height="1" fill="#9a9a9a"/>
<rect x="10" y="82" width="1" height="1" fill="#9a9a9a"/><rect x="12" y="82" width="1" height="1" fill="#9a9a9a"/>
<rect x="10" y="84" width="1" height="1" fill="#9a9a9a"/><rect x="12" y="84" width="1" height="1" fill="#9a9a9a"/>
<rect x="10" y="86" width="1" height="1" fill="#9a9a9a"/><rect x="12" y="86" width="1" height="1" fill="#9a9a9a"/>
<rect x="63" y="58" width="1" height="30" fill="#8a8a8a"/><rect x="64" y="58" width="1" height="30" fill="#f2f2f2"/>
<rect x="424" y="60" width="1" height="25" fill="#8a8a8a"/><rect x="425" y="60" width="1" height="25" fill="#f2f2f2"/>
<rect x="570" y="61" width="1" height="24" fill="#8a8a8a"/><rect x="571" y="61" width="1" height="24" fill="#f2f2f2"/>
<rect x="716" y="61" width="1" height="25" fill="#8a8a8a"/><rect x="717" y="61" width="1" height="25" fill="#f2f2f2"/>
<path d="M23 66v10.5l2.8-2.8h5.2z" fill="#3a3a3a" shape-rendering="auto"/>
<path d="M35.5 71.5v10M30.5 76.5h10" stroke="#3a3a3a" stroke-width="1.1" shape-rendering="auto"/><path d="M34 73l1.5-1.8 1.5 1.8zM34 80l1.5 1.8 1.5-1.8zM32 75l-1.8 1.5 1.8 1.5zM39 75l1.8 1.5-1.8 1.5z" fill="#3a3a3a" stroke="#3a3a3a" stroke-width=".5" shape-rendering="auto"/>
<path d="M48 72h5l-2.5 3z" fill="#1a1a1a" shape-rendering="auto"/>
<path d="M244 74.5h7l-3.5 4z" fill="#1a1a1a" shape-rendering="auto"/>
<rect x="437" y="67" width="16" height="1" fill="#3a3a3a"/>
<rect x="438.5" y="69.5" width="5" height="9" fill="url(#gb)" stroke="#4a4a4a"/>
<rect x="446.5" y="69.5" width="5" height="4" fill="url(#gb)" stroke="#4a4a4a"/>
<rect x="456" y="73" width="16" height="1" fill="#3a3a3a"/>
<rect x="459.5" y="68.5" width="5" height="10" fill="url(#gb)" stroke="#4a4a4a"/>
<rect x="466.5" y="71.5" width="4" height="4" fill="url(#gb)" stroke="#4a4a4a"/>
<rect x="477" y="78" width="16" height="1" fill="#3a3a3a"/>
<rect x="479.5" y="68.5" width="5" height="9" fill="url(#gb)" stroke="#4a4a4a"/>
<rect x="487.5" y="72.5" width="4" height="4" fill="url(#gb)" stroke="#4a4a4a"/>
<rect x="507" y="66" width="1" height="15" fill="#3a3a3a"/>
<rect x="510.5" y="67.5" width="4" height="4" fill="url(#gb)" stroke="#4a4a4a"/>
<rect x="510.5" y="74.5" width="8" height="5" fill="url(#gb)" stroke="#4a4a4a"/>
<rect x="533" y="65" width="1" height="17" fill="#3a3a3a"/>
<rect x="531.5" y="67.5" width="4" height="4" fill="url(#gb)" stroke="#4a4a4a"/>
<rect x="528.5" y="74.5" width="10" height="5" fill="url(#gb)" stroke="#4a4a4a"/>
<rect x="557" y="66" width="1" height="15" fill="#3a3a3a"/>
<rect x="551.5" y="67.5" width="4" height="4" fill="url(#gb)" stroke="#4a4a4a"/>
<rect x="547.5" y="74.5" width="9" height="5" fill="url(#gb)" stroke="#4a4a4a"/>
<rect x="583" y="67" width="16" height="1" fill="#3a3a3a"/>
<rect x="588.5" y="67.5" width="4" height="4" fill="url(#gb)" stroke="#4a4a4a"/>
<rect x="583" y="74" width="16" height="1" fill="#3a3a3a"/>
<rect x="586.5" y="74.5" width="9" height="5" fill="url(#gb)" stroke="#4a4a4a"/>
<rect x="603" y="69" width="5" height="1" fill="#3a3a3a"/>
<rect x="614" y="69" width="5" height="1" fill="#3a3a3a"/>
<rect x="608.5" y="67.5" width="5" height="4" fill="url(#gb)" stroke="#4a4a4a"/>
<rect x="603" y="76" width="5" height="1" fill="#3a3a3a"/>
<rect x="616" y="76" width="3" height="1" fill="#3a3a3a"/>
<rect x="607.5" y="74.5" width="9" height="5" fill="url(#gb)" stroke="#4a4a4a"/>
<rect x="628.5" y="67.5" width="4" height="4" fill="url(#gb)" stroke="#4a4a4a"/>
<rect x="623" y="71" width="16" height="1" fill="#3a3a3a"/>
<rect x="627.5" y="74.5" width="8" height="5" fill="url(#gb)" stroke="#4a4a4a"/>
<rect x="623" y="79" width="16" height="1" fill="#3a3a3a"/>
<rect x="652" y="67" width="1" height="13" fill="#3a3a3a"/>
<rect x="653.5" y="69.5" width="5" height="9" fill="url(#gb)" stroke="#4a4a4a"/>
<rect x="660" y="67" width="1" height="13" fill="#3a3a3a"/>
<rect x="661.5" y="71.5" width="4" height="4" fill="url(#gb)" stroke="#4a4a4a"/>
<rect x="674" y="67" width="1" height="13" fill="#3a3a3a"/>
<rect x="672.5" y="71.5" width="4" height="4" fill="url(#gb)" stroke="#4a4a4a"/>
<rect x="682" y="67" width="1" height="13" fill="#3a3a3a"/>
<rect x="679.5" y="69.5" width="6" height="9" fill="url(#gb)" stroke="#4a4a4a"/>
<rect x="692.5" y="71.5" width="4" height="4" fill="url(#gb)" stroke="#4a4a4a"/>
<rect x="696" y="67" width="1" height="13" fill="#3a3a3a"/>
<rect x="699.5" y="69.5" width="5" height="9" fill="url(#gb)" stroke="#4a4a4a"/>
<rect x="704" y="67" width="1" height="13" fill="#3a3a3a"/>
<g shape-rendering="auto"><ellipse cx="731.6" cy="72.2" rx="3.2" ry="5.4" fill="#e8e8e8" stroke="#8a8a8a" stroke-width=".9"/><ellipse cx="740" cy="72.2" rx="3.2" ry="5.4" fill="#e8e8e8" stroke="#8a8a8a" stroke-width=".9"/><path d="M729.5 72.5h4M738 72.5h4" stroke="#999" stroke-width="1"/><circle cx="731.6" cy="74.5" r=".7" fill="#555"/><circle cx="740" cy="74.5" r=".7" fill="#555"/></g>
<rect x="735" y="65" width="1" height="17" fill="#3a3a3a"/>
</g>
</svg>
<div class="t" style="left:66px;top:14px;font-size:9px;font-weight:bold;letter-spacing:-0.3px;color:#222">Br</div>
<div class="t" style="left:100px;top:14px;font-size:9px;font-weight:bold;color:#1a1a1a">Mb</div>
</body></html>
